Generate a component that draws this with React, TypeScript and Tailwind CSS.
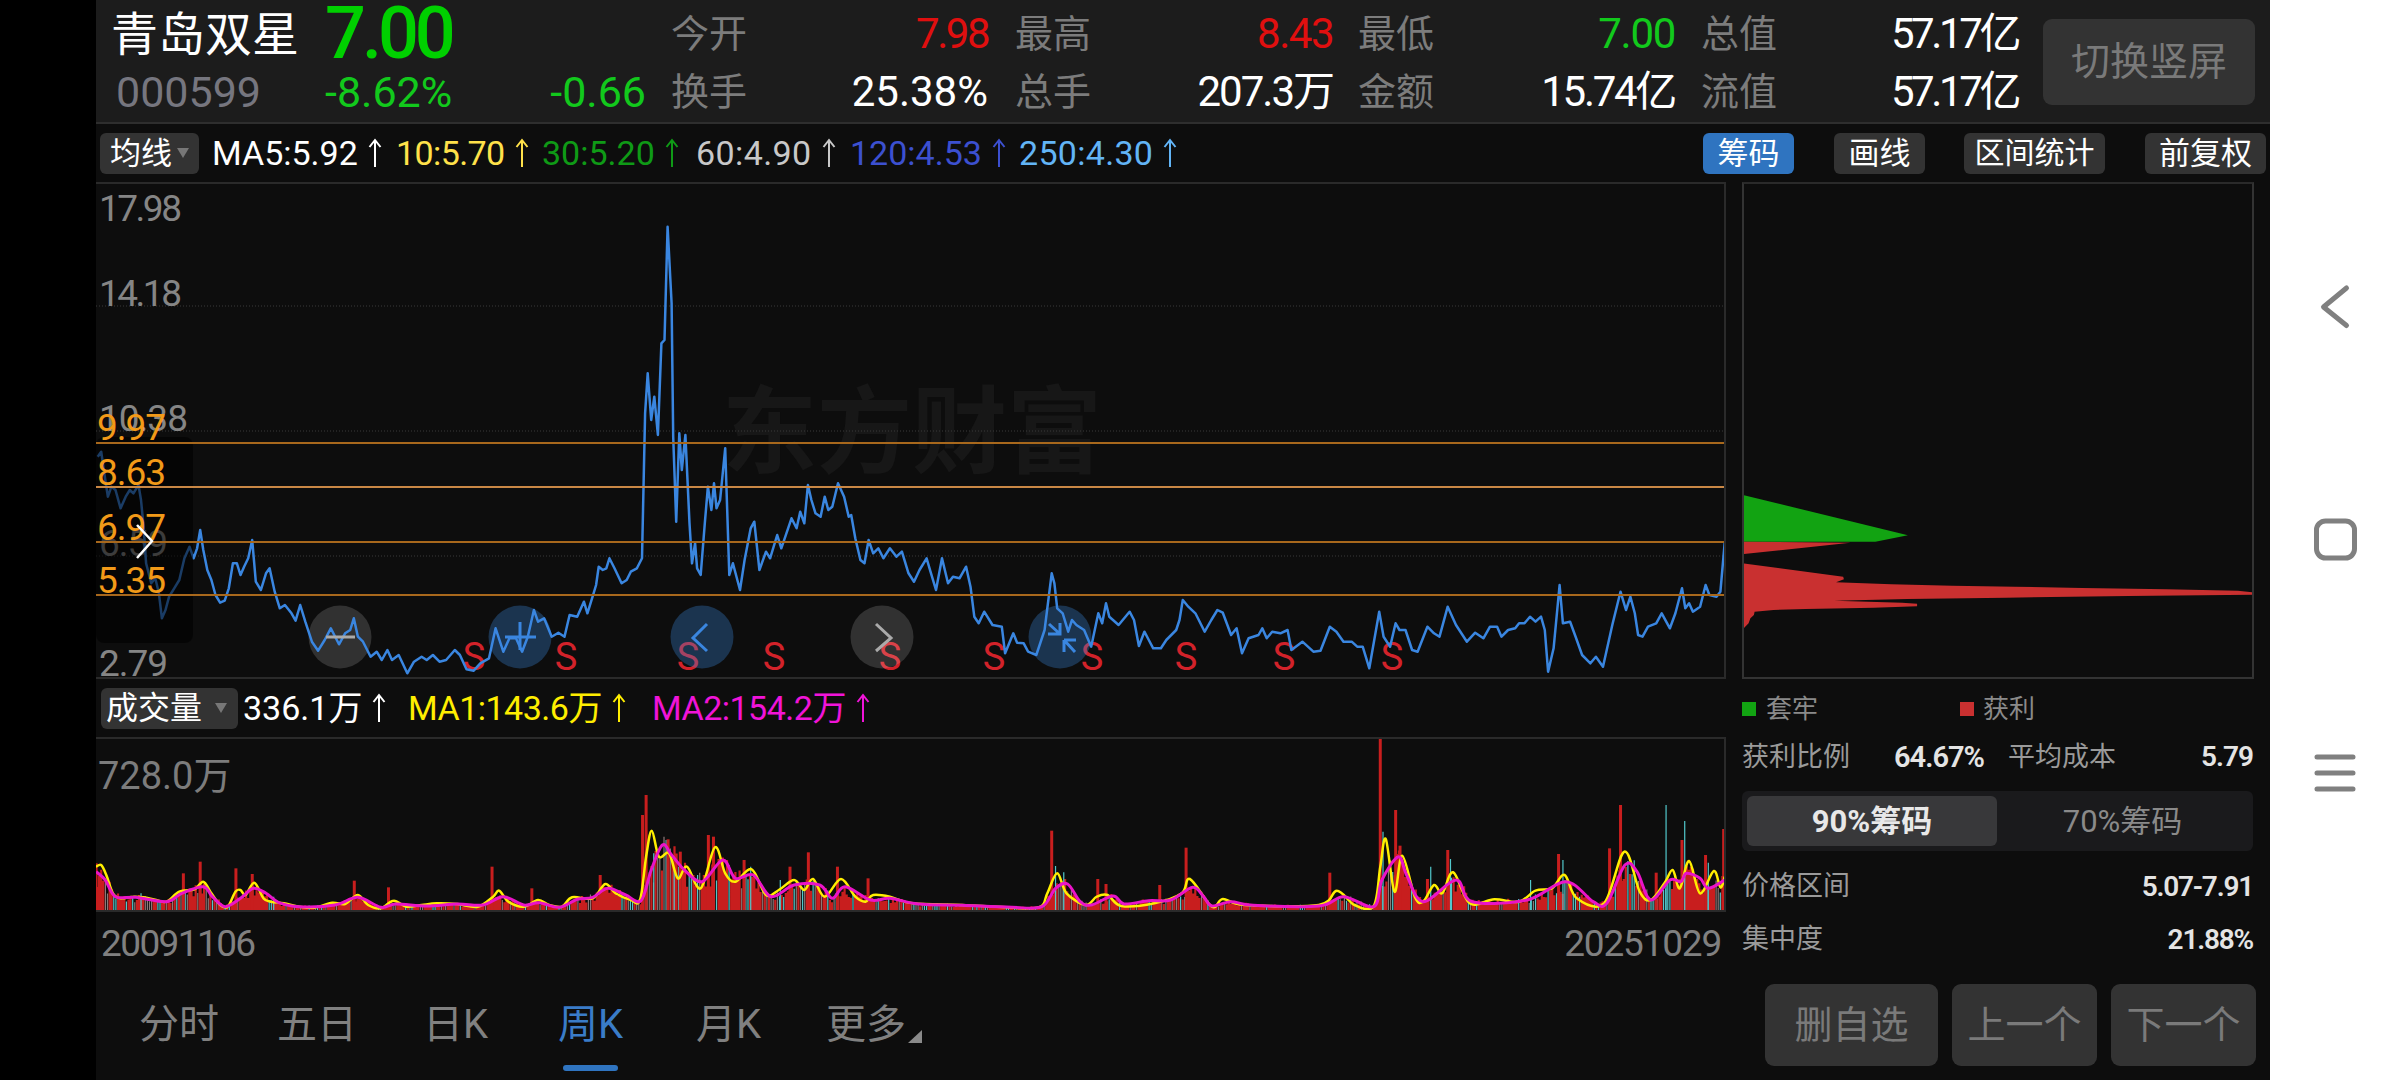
const F = { fontFamily: 'Roboto, "Noto Sans CJK SC", sans-serif' };

const z3 = (a: number[]) => { const o: [number, number][] = []; for (let i = 0; i < a.length; i += 2) o.push([90 + a[i] / 1.96, 180 + a[i + 1] / 3]); return o; };
const z4 = (a: number[]) => { const o: [number, number][] = []; for (let i = 0; i < a.length; i += 2) o.push([880 + a[i] / 1.823, 180 + a[i + 1] / 3]); return o; };
const v5 = (a: number[]) => { const o: [number, number][] = []; for (let i = 0; i < a.length; i += 2) o.push([90 + a[i] / 1.96, 680 + a[i + 1] / 3]); return o; };
const v6 = (a: number[]) => { const o: [number, number][] = []; for (let i = 0; i < a.length; i += 2) o.push([880 + a[i] / 1.823, 680 + a[i + 1] / 3]); return o; };
const pts = (p: [number, number][]) => p.map(([x, y]) => `${x.toFixed(1)},${y.toFixed(1)}`).join(' ');
const smooth = (p: [number, number][]) => {
  let d = `M${p[0][0].toFixed(1)} ${p[0][1].toFixed(1)}`;
  for (let i = 0; i < p.length - 1; i++) {
    const a = p[Math.max(i - 1, 0)], b = p[i], c = p[i + 1], e = p[Math.min(i + 2, p.length - 1)];
    const c1x = b[0] + (c[0] - a[0]) / 6, c1y = b[1] + (c[1] - a[1]) / 6;
    const c2x = c[0] - (e[0] - b[0]) / 6, c2y = c[1] - (e[1] - b[1]) / 6;
    d += `C${c1x.toFixed(1)} ${c1y.toFixed(1)} ${c2x.toFixed(1)} ${c2y.toFixed(1)} ${c[0].toFixed(1)} ${c[1].toFixed(1)}`;
  }
  return d;
};

const priceLine = [
  ...z3([15,830,22,815,30,900,35,950,42,920,50,930,60,985,70,950,78,930,85,940,95,915,100,960,105,1040,110,1150,120,1210,128,1195,135,1240,141,1315,148,1290,155,1250,165,1225,175,1200,185,1135,195,1100,203,1135,210,1105,216,1050,222,1110,230,1170,238,1200,246,1245,255,1268,264,1262,272,1225,280,1150,288,1150,295,1185,302,1160,310,1135,318,1080,325,1205,335,1230,345,1180,352,1165,362,1235,372,1285,382,1275,395,1300,403,1322,412,1275,422,1325,435,1385,447,1412,460,1380,472,1345,488,1393,500,1360,510,1350,517,1315,525,1370,535,1385,550,1430,562,1415,572,1440,583,1410,592,1440,605,1425,622,1480,635,1445,650,1430,660,1440,672,1425,685,1445,698,1440,715,1410,725,1425,738,1468,752,1472,765,1450,782,1435,795,1345,810,1415,822,1375,835,1375,847,1415,858,1370,870,1290,878,1325,890,1315,905,1370,918,1358,930,1370,940,1305,955,1310,968,1265,975,1300,985,1250,992,1215,997,1160,1005,1170,1012,1165,1018,1135,1028,1165,1042,1210,1052,1200,1060,1175,1072,1165,1082,1135,1088,700,1093,580,1100,720,1106,650,1113,765,1120,490,1126,480,1132,140,1140,370,1143,770,1149,1025,1155,760,1160,870,1167,765,1175,1030,1180,1150,1186,1090,1190,1165,1197,1185,1205,1030,1211,920,1218,990,1223,910,1228,985,1235,960,1245,805,1253,1185,1260,1150,1274,1230,1283,1140,1295,1045,1302,1025,1312,1170,1325,1115,1333,1135,1347,1065,1355,1105,1375,1015,1385,1045,1392,995,1400,1030,1407,915,1414,960,1422,1000,1432,1010,1440,950,1447,990,1455,980,1466,910,1478,950,1487,1010,1492,1005,1500,1075,1510,1140,1518,1150,1526,1080,1535,1120,1545,1105,1555,1135]),
  ...z4([18,1105,30,1130,40,1115,52,1180,62,1205,72,1170,85,1135,92,1175,102,1230,113,1135,124,1210,133,1190,145,1195,157,1160,165,1220,172,1310,180,1330,190,1295,205,1335,222,1340,228,1420,243,1360,250,1388,262,1390,270,1415,285,1425,300,1350,313,1180,318,1210,323,1285,333,1300,343,1355,350,1320,358,1335,372,1350,385,1400,398,1300,405,1330,412,1270,418,1310,435,1335,455,1295,463,1320,472,1398,482,1355,490,1380,498,1405,512,1405,522,1380,540,1350,546,1320,552,1260,562,1280,575,1300,592,1355,604,1320,615,1290,625,1298,640,1365,650,1345,660,1420,672,1375,690,1365,697,1345,705,1375,715,1355,730,1360,743,1350,750,1410,770,1385,790,1415,803,1412,820,1340,832,1355,845,1385,860,1385,870,1400,880,1400,892,1465,910,1295,918,1370,930,1400,940,1330,947,1350,958,1350,970,1410,980,1415,998,1340,1010,1360,1020,1370,1035,1280,1050,1335,1070,1385,1085,1358,1100,1375,1112,1340,1125,1340,1133,1370,1145,1350,1158,1345,1165,1330,1175,1330,1185,1310,1195,1325,1205,1310,1212,1350,1218,1475,1228,1405,1239,1215,1245,1330,1258,1325,1268,1370,1280,1425,1295,1450,1305,1430,1318,1460,1335,1335,1350,1235,1360,1290,1368,1250,1376,1300,1382,1365,1390,1370,1400,1340,1415,1330,1425,1300,1440,1345,1450,1300,1462,1225,1468,1285,1475,1270,1482,1295,1495,1280,1505,1215,1512,1245,1525,1250,1532,1235,1540,1085]),
];

const yellow = [
  ...v5([12,560,22,555,32,585,45,640,60,655,85,650,105,652,130,660,150,665,175,635,205,628,222,605,238,640,255,675,270,680,285,635,295,630,305,645,322,608,340,655,355,665,380,670,410,680,440,683,475,668,500,672,525,645,545,675,570,685,595,662,620,680,650,675,680,670,720,672,760,680,790,650,802,632,820,665,850,680,878,660,900,675,925,680,945,652,985,655,1010,612,1030,640,1060,660,1078,660,1090,530,1101,452,1115,530,1135,520,1152,595,1170,560,1197,625,1225,502,1245,580,1265,605,1297,568,1325,645,1350,630,1380,600,1400,630,1417,597,1440,650,1472,597,1500,650,1520,665,1535,645]),
  ...v6([18,650,60,670,150,675,230,682,290,682,305,640,323,580,340,640,375,675,395,650,415,645,440,678,500,670,550,640,565,597,605,680,625,657,665,675,800,675,833,632,865,675,900,678,912,560,922,477,938,635,952,527,975,650,990,665,1010,615,1025,640,1045,577,1075,670,1120,658,1165,665,1195,632,1225,625,1248,585,1270,655,1320,670,1357,515,1385,635,1405,660,1430,610,1445,570,1458,625,1475,543,1495,640,1520,573,1532,622,1540,590]),
];
const magenta = [
  ...v5([12,575,30,600,50,650,90,652,150,665,180,640,222,620,240,650,265,680,295,655,320,625,345,640,370,668,410,680,480,675,525,652,570,682,600,672,660,678,720,672,770,675,810,650,850,675,880,668,920,682,955,658,985,652,1015,625,1050,645,1080,662,1100,570,1122,495,1140,525,1165,570,1200,605,1240,540,1265,595,1300,585,1335,650,1380,615,1430,615,1455,655,1480,620,1530,660]),
  ...v6([18,655,70,672,150,676,240,682,295,680,320,625,342,612,365,665,385,675,425,648,445,672,490,662,530,660,570,622,590,650,605,678,640,665,680,676,800,678,845,650,900,680,915,600,945,530,960,585,990,665,1050,600,1080,665,1180,660,1250,605,1300,665,1325,670,1358,555,1380,575,1405,660,1440,600,1460,605,1470,580,1495,595,1510,625,1540,600]),
];
const interp = (p: [number, number][], x: number) => {
  if (x <= p[0][0]) return p[0][1];
  for (let i = 1; i < p.length; i++) if (x <= p[i][0]) { const t = (x - p[i - 1][0]) / (p[i][0] - p[i - 1][0] || 1); return p[i - 1][1] + (p[i][1] - p[i - 1][1]) * t; }
  return p[p.length - 1][1];
};
let seed = 12345;
const rnd = () => { seed = (seed * 1664525 + 1013904223) % 4294967296; return seed / 4294967296; };
let redD = '', cyanD = '', greyD = '';
for (let x = 97; x < 1725; x += 2.1) {
  const h = Math.max(3, (910 - interp(magenta, x)) * (0.6 + rnd() * 0.65));
  const r = rnd();
  const cmd = `M${x.toFixed(1)} 910V${(910 - h).toFixed(1)}`;
  if (r < 0.68) redD += cmd; else if (r < 0.85) greyD += cmd; else cyanD += cmd;
}
const spikes = [
  ...v5([12,550,183,580,216,545,286,565,318,582,518,602,585,622,788,560,866,625,1000,585,1090,345,1083,405,1133,478,1157,515,1212,465,1222,470,1282,540,1372,560,1408,517,1465,560,1525,595]),
  ...v6([313,452,397,597,412,612,510,615,558,503,820,578,912,172,940,390,948,497,998,597,1035,510,1237,522,1330,505,1350,375,1415,578,1462,480,1505,525,1538,447]),
];
const cyanSpikes = [...v5([100,640,360,650,1105,520,1145,570,1295,560,1353,600]), ...v6([320,558,335,577,917,455,1004,560,1040,537,1186,600,1245,540,1433,375,1467,423,1510,548])];

const chipGreen = [[62,134],[526,256],[435,275],[62,275]] as [number, number][];
const chipRed1 = [[62,275],[365,278],[62,313]] as [number, number][];
const chipRed2 = [[62,340],[345,380],[347,388],[325,397],[480,403],[650,407],[825,410],[1015,414],[1250,418],[1450,422],[1494,427],[1494,434],[1145,438],[800,443],[525,447],[320,452],[510,458],[552,461],[552,469],[430,473],[240,477],[150,480],[97,485],[95,495],[85,505],[80,520],[62,540]] as [number, number][];
const chip = (p: [number, number][]) => p.map(([x, y]) => `${(x / 2.8 - 24).toFixed(1)},${(y / 3 + 266).toFixed(1)}`).join(' ');

const Arrow = ({ c }: { c: string }) => (
  <svg width="14" height="30" viewBox="0 0 14 30" className="ml-[10px] shrink-0" fill="none" stroke={c} strokeWidth="2"><path d="M7 29V2M1.5 9 7 2l5.5 7" /></svg>
);
const Stat = ({ label, value, color, pr }: { label: string; value: string; color: string; pr: string }) => (
  <div className={`flex items-center justify-between h-[58px] ${pr}`}>
    <span className="text-[38px] leading-none text-[#7c7c7c]">{label}</span>
    <span className={`text-[42px] leading-none ${color}`}>{value}</span>
  </div>
);
const Small = ({ t, cls }: { t: string; cls: string }) => (
  <div className={`h-[41px] flex items-center justify-center rounded-[6px] leading-none text-white ${cls}`}>{t}</div>
);
const Row = ({ a, b }: { a: string; b: string }) => (
  <div className="flex justify-between items-center h-[53px]">
    <span className="text-[27px] leading-none text-[#9a9a9a]">{a}</span>
    <span className="text-[28px] leading-none font-semibold text-[#e4e4e4] tracking-[-1.2px]">{b}</span>
  </div>
);
const Btn = ({ t, w }: { t: string; w: string }) => (
  <div className={`${w} h-[82px] rounded-[9px] bg-[#333333] flex items-center justify-center text-[38px] leading-none text-[#7a7a7a]`}>{t}</div>
);
const Tab = ({ t, w, on }: { t: string; w: string; on?: boolean }) => (
  <div className={`${w} relative text-[40px] leading-none ${on ? 'text-[#3a7cc8]' : 'text-[#808080]'}`}>
    {t}
    {on && <div className="absolute left-[5px] top-[60px] w-[55px] h-[6px] rounded-full bg-[#2f74c0]" />}
  </div>
);

const MA = [
  ['MA5:5.92', 'text-white', '#ffffff', 'w-[184px]'],
  ['10:5.70', 'text-[#ffe14a] tracking-[-0.6px]', '#ffe14a', 'w-[146px]'],
  ['30:5.20', 'text-[#0f9a16]', '#0f9a16', 'w-[154px]'],
  ['60:4.90', 'text-[#c8c8c8] tracking-[0.4px]', '#c8c8c8', 'w-[154px]'],
  ['120:4.53', 'text-[#3c50d0]', '#3c50d0', 'w-[169px]'],
  ['250:4.30', 'text-[#62b4f6] tracking-[0.3px]', '#62b4f6', 'w-[170px]'],
];
const axis = [['17.98', 208, -2.5], ['14.18', 293, -2.5], ['10.38', 418, -1], ['6.59', 543, -1], ['2.79', 663, -1]] as [string, number, number][];
const orange = [['9.97', 427, 443, '#a8681c'], ['8.63', 472, 487, '#c98745'], ['6.97', 527, 542, '#a8681c'], ['5.35', 580, 595, '#a8681c']] as [string, number, number, string][];
const sMarks = [474, 566, 688, 774, 890, 994, 1092, 1186, 1284, 1392];

export default function App() {
  return (
    <div className="flex w-[2400px] h-[1080px] overflow-hidden bg-white" style={F}>
      <div className="w-[96px] bg-black" />
      <div className="w-[2174px] flex flex-col bg-[#0d0d0d]">
        {/* header */}
        <div className="h-[124px] flex bg-[#1c1c1c] border-b-2 border-[#2e2e2e] pt-[5px]">
          <div className="w-[575px] pl-[15px]">
            <div className="flex items-center h-[58px]">
              <span className="w-[214px] text-[47px] leading-none text-white">青岛双星</span>
              <span className="text-[72px] leading-none font-medium text-[#00d000] tracking-[-4px]">7.00</span>
            </div>
            <div className="flex items-center h-[58px] text-[43px] leading-none">
              <span className="w-[214px] pl-[5px] text-[#76767f]">000599</span>
              <span className="w-[321px] flex justify-between text-[#12c91c]"><span>-8.62%</span><span>-0.66</span></span>
            </div>
          </div>
          <div className="w-[344px]">
            <Stat label="今开" value="7.98" color="text-[#e00f0f] tracking-[-2.5px]" pr="pr-[27px]" />
            <Stat label="换手" value="25.38%" color="text-white" pr="pr-[27px]" />
          </div>
          <div className="w-[343px]">
            <Stat label="最高" value="8.43" color="text-[#e00f0f] tracking-[-1.5px]" pr="pr-[25px]" />
            <Stat label="总手" value="207.3万" color="text-white tracking-[-2px]" pr="pr-[25px]" />
          </div>
          <div className="w-[343px]">
            <Stat label="最低" value="7.00" color="text-[#12c91c] tracking-[-1.3px]" pr="pr-[26px]" />
            <Stat label="金额" value="15.74亿" color="text-white tracking-[-2.3px]" pr="pr-[26px]" />
          </div>
          <div className="w-[342px]">
            <Stat label="总值" value="57.17亿" color="text-white tracking-[-3.4px]" pr="pr-[25px]" />
            <Stat label="流值" value="57.17亿" color="text-white tracking-[-3.4px]" pr="pr-[25px]" />
          </div>
          <div className="mt-[14px] w-[212px] h-[86px] rounded-[9px] bg-[#333333] flex items-center justify-center text-[39px] leading-none text-[#7a7a7a]">切换竖屏</div>
        </div>

        {/* MA row */}
        <div className="h-[58px] flex items-center pl-[4px]">
          <div className="w-[99px] h-[41px] mr-[13px] rounded-[6px] bg-[#333333] flex items-center pl-[10px] text-[31px] leading-none text-white">
            均线
            <span className="ml-[5px] w-0 h-0 border-x-[6px] border-t-[10px] border-x-transparent border-t-[#777777]" />
          </div>
          {MA.map(([t, c, hex, w]) => (
            <div key={t} className={`flex items-center ${w} text-[34px] leading-none ${c}`}>{t}<Arrow c={hex} /></div>
          ))}
          <div className="ml-auto mr-[4px] flex items-center">
            <Small t="筹码" cls="w-[91px] bg-[#2f74c0] text-[31px]" />
            <Small t="画线" cls="w-[91px] ml-[40px] bg-[#333333] text-[31px]" />
            <Small t="区间统计" cls="w-[141px] ml-[39px] bg-[#333333] text-[30px]" />
            <Small t="前复权" cls="w-[121px] ml-[40px] bg-[#333333] text-[31px]" />
          </div>
        </div>

        {/* body */}
        <div className="flex-1 flex min-h-0">
          <div className="w-[1646px] flex flex-col">
            <div className="w-[1630px] h-[497px] border-t-2 border-b-2 border-r-2 border-[#2a2a2a]">
              <svg viewBox="96 184 1628 493" width="1628" height="493" className="block" style={F}>
                <text x="722" y="466" fontSize="95" fontWeight="700" fill="#171717">东方财富</text>
                {[306, 431, 556].map((y) => <line key={y} x1="96" x2="1725" y1={y} y2={y} stroke="#3a3a3a" strokeWidth="1" strokeDasharray="1 2" />)}
                {axis.map(([t, y, ls]) => <text key={t} x="99" y={y + 13} fontSize="37" fill="#858585" letterSpacing={ls}>{t}</text>)}
                {sMarks.map((x) => <text key={x} x={x} y="670" fontSize="38" fill="#d2222a" textAnchor="middle">S</text>)}
                <circle cx="340" cy="637" r="31.5" fill="rgba(255,255,255,.15)" />
                <circle cx="520" cy="637" r="31.5" fill="rgba(60,143,233,.3)" />
                <circle cx="702" cy="637" r="31.5" fill="rgba(60,143,233,.3)" />
                <circle cx="882" cy="637" r="31.5" fill="rgba(255,255,255,.15)" />
                <circle cx="1060" cy="637" r="31.5" fill="rgba(60,143,233,.3)" />
                <polyline points={pts(priceLine)} fill="none" stroke="#3a86e0" strokeWidth="2.5" strokeLinejoin="round" />
                <g fill="none" strokeWidth="3">
                  <path d="M326 637H355" stroke="#aaaaaa" />
                  <path d="M505 637H536M520 622V650" stroke="#3a86e0" />
                  <path d="M707 624 693 638 707 651" stroke="#3a86e0" />
                  <path d="M876 624 891 638 876 651" stroke="#aaaaaa" />
                  <path d="M1048 634H1060V623M1049 624 1060 634M1064 640H1076M1064 640V652M1064 640 1075 652" stroke="#3a86e0" />
                </g>
                <rect x="96" y="437" width="97" height="206" rx="8" fill="rgba(0,0,0,.55)" />
                {orange.map(([t, ty, ly, c]) => (
                  <g key={t}>
                    <line x1="96" x2="1725" y1={ly} y2={ly} stroke={c} strokeWidth="2" />
                    <text x="97" y={ty + 13} fontSize="37" fill="#f29a18" letterSpacing="-1">{t}</text>
                  </g>
                ))}
                <path d="M137 525 152 541 137 558" fill="none" stroke="#ffffff" strokeWidth="2.5" />
              </svg>
            </div>
            <div className="h-[58px] flex items-center pl-[5px]">
              <div className="w-[137px] h-[41px] mr-[5px] rounded-[6px] bg-[#333333] flex items-center pl-[5px] text-[32px] leading-none text-white">
                成交量
                <span className="ml-[13px] w-0 h-0 border-x-[6px] border-t-[10px] border-x-transparent border-t-[#777777]" />
              </div>
              <div className="w-[165px] flex items-center text-[34px] leading-none text-white">336.1万<Arrow c="#ffffff" /></div>
              <div className="w-[244px] flex items-center text-[34px] leading-none text-[#ffee00] tracking-[-0.5px]">MA1:143.6万<Arrow c="#ffee00" /></div>
              <div className="flex items-center text-[34px] leading-none text-[#f014d8] tracking-[-0.5px]">MA2:154.2万<Arrow c="#f014d8" /></div>
            </div>
            <div className="relative w-[1630px] h-[175px] border-t-2 border-b-2 border-r-2 border-[#2a2a2a]">
              <svg viewBox="96 739 1628 171" width="1628" height="171" className="block" style={F}>
                <path d={greyD} stroke="#8c7878" strokeWidth="1.2" fill="none" />
                <path d={redD} stroke="#c81e1e" strokeWidth="2.2" fill="none" />
                <path d={cyanD} stroke="#52c8cc" strokeWidth="1.2" fill="none" />
                {cyanSpikes.map(([x, y]) => <line key={x} x1={x} x2={x} y1="910" y2={y} stroke="#52c8cc" strokeWidth="1.2" />)}
                {spikes.map(([x, y]) => <line key={x} x1={x} x2={x} y1="910" y2={y} stroke="#c81e1e" strokeWidth="3" />)}
                <path d={smooth(yellow)} fill="none" stroke="#ffee00" strokeWidth="2.5" />
                <path d={smooth(magenta)} fill="none" stroke="#ea14c8" strokeWidth="3" />
              </svg>
              <span className="absolute left-[2px] top-[18px] text-[38px] leading-none text-[#7c7c7c]">728.0万</span>
            </div>
            <div className="h-[62px] flex items-center justify-between w-[1629px] pl-[5px] pr-[4px] text-[37px] leading-none text-[#808080]">
              <span className="tracking-[-1.6px]">20091106</span><span className="tracking-[-1.2px]">20251029</span>
            </div>
            <div className="flex items-start pl-[43px] pt-[31px]">
              <Tab t="分时" w="w-[138px]" />
              <Tab t="五日" w="w-[146px]" />
              <Tab t="日K" w="w-[135px]" />
              <Tab t="周K" w="w-[138px]" on />
              <Tab t="月K" w="w-[130px]" />
              <div className="relative text-[40px] leading-none text-[#808080]">
                更多
                <svg width="14" height="13" viewBox="0 0 14 13" className="absolute left-[82px] top-[25px]"><path d="M14 0V13H0Z" fill="#8a8a8a" /></svg>
              </div>
            </div>
          </div>

          <div className="w-[511px] flex flex-col">
            <div className="w-[512px] h-[497px] border-2 border-[#333333] border-t-[#2a2a2a]">
              <svg viewBox="0 0 508 493" width="508" height="493" className="block">
                <polygon points={chip(chipGreen)} fill="#12a312" />
                <polygon points={chip(chipRed1)} fill="#c93030" />
                <polygon points={chip(chipRed2)} fill="#c93030" />
              </svg>
            </div>
            <div className="h-[56px] flex items-center text-[26px] leading-none text-[#8a8a8a] pt-[4px]">
              <span className="w-[14px] h-[14px] bg-[#12a312] mr-[10px]" />
              <span className="w-[194px]">套牢</span>
              <span className="w-[14px] h-[14px] bg-[#c93030] mr-[9px]" />
              <span>获利</span>
            </div>
            <div className="h-[44px] flex items-center justify-between">
              <span className="w-[152px] text-[27px] leading-none text-[#9a9a9a]">获利比例</span>
              <span className="text-[29px] leading-none font-semibold text-[#e4e4e4] tracking-[-1px]">64.67%</span>
              <span className="text-[27px] leading-none text-[#9a9a9a] ml-[24px] mr-auto">平均成本</span>
              <span className="text-[28px] leading-none font-semibold text-[#e4e4e4] tracking-[-1px]">5.79</span>
            </div>
            <div className="mt-[12px] h-[60px] rounded-[6px] bg-[#1a1a1c] p-[5px] flex items-center">
              <div className="w-[250px] h-[50px] rounded-[6px] bg-[#38383a] flex items-center justify-center text-[31px] leading-none font-bold text-[#e8e8e8]">90%筹码</div>
              <div className="flex-1 flex items-center justify-center text-[31px] leading-none text-[#8a8a8a]">70%筹码</div>
            </div>
            <div className="mt-[9px]">
              <Row a="价格区间" b="5.07-7.91" />
              <Row a="集中度" b="21.88%" />
            </div>
            <div className="mt-[18px] flex gap-[14px] ml-[23px] w-[491px]">
              <Btn t="删自选" w="w-[173px]" />
              <Btn t="上一个" w="w-[145px]" />
              <Btn t="下一个" w="w-[145px]" />
            </div>
          </div>
        </div>
      </div>
      <div className="flex-1 relative bg-white">
        <svg className="absolute top-[270px] left-[30px]" width="100" height="540" viewBox="2300 270 100 540" fill="none" stroke="#808080" strokeLinecap="round" strokeLinejoin="round">
          <path d="M2346.5 288 2323.5 307 2346.5 325.5" strokeWidth="5" />
          <rect x="2316.5" y="521" width="38" height="37" rx="9" strokeWidth="5" />
          <path d="M2317 757H2353M2317 773H2353M2317 789H2353" strokeWidth="5" />
        </svg>
      </div>
    </div>
  );
}
